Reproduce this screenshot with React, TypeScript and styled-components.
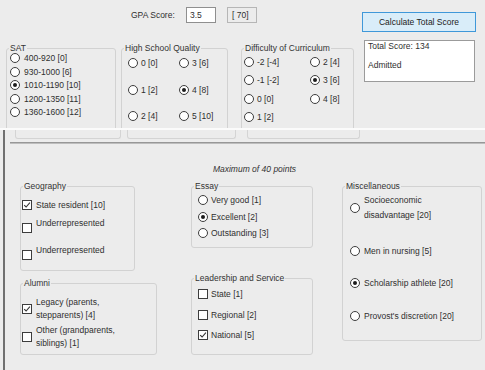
import React from "react";
import styled, { createGlobalStyle } from "styled-components";

const GlobalStyle = createGlobalStyle`
  html, body {
    margin: 0;
    padding: 0;
    background: #ececec;
  }
  body {
    font-family: "Liberation Sans", Arial, sans-serif;
  }
`;

const Window = styled.div`
  width: 485px;
  height: 370px;
  overflow: hidden;
  display: flex;
  flex-direction: column;
  background: #ececec;
  color: #2f2f2f;
  font-size: 8.5px;
  line-height: 10px;
`;

/* ---------- top panel ---------- */

const TopPanel = styled.div`
  flex: none;
  height: 128px;
  overflow: hidden;
  display: flex;
  padding-left: 6px;
`;

const InputsColumn = styled.div`
  flex: none;
  width: 348px;
  display: flex;
  flex-direction: column;
`;

const GpaRow = styled.div`
  display: flex;
  align-items: center;
  height: 16px;
  margin-top: 7px;
  padding-left: 125px;
`;

const GpaLabel = styled.span`
  width: 55px;
`;

const TextBox = styled.div`
  box-sizing: border-box;
  width: 30px;
  height: 16px;
  padding-left: 3px;
  line-height: 14px;
  border: 1px solid #8f8f8f;
  background: #fff;
`;

const Readout = styled.div`
  box-sizing: border-box;
  width: 30px;
  height: 16px;
  margin-left: 11px;
  padding-left: 4px;
  line-height: 14px;
  border: 1px solid #b6b6b6;
`;

const GroupRow = styled.div`
  display: flex;
  margin-top: 20px;
`;

const ActionColumn = styled.div`
  flex: none;
  width: 114px;
  margin-left: 8px;
  display: flex;
  flex-direction: column;
`;

const CalcButton = styled.button`
  box-sizing: border-box;
  height: 20px;
  margin-top: 12px;
  padding: 0;
  border: 1px solid #3f98d9;
  background: #d9edf9;
  color: #222;
  font: inherit;
  line-height: 18px;
`;

const ResultBox = styled.div`
  box-sizing: border-box;
  width: 111px;
  height: 42px;
  margin: 8px 0 0 2px;
  padding: 1px 3px;
  border: 1px solid #9b9b9b;
  background: #fff;
  line-height: 9.5px;
  white-space: pre-line;
`;

/* ---------- group boxes ---------- */

const GroupBox = styled.fieldset<{ $w: number; $h: number; $ml?: number }>`
  box-sizing: border-box;
  flex: none;
  width: ${(p) => p.$w}px;
  height: ${(p) => p.$h}px;
  min-width: 0;
  margin: 0 0 0 ${(p) => p.$ml ?? 0}px;
  padding: 0;
  border: 1px solid #d2d2d2;
  border-radius: 3px;
`;

const Caption = styled.legend`
  height: 10px;
  margin-left: 2px;
  padding: 0 1px;
  line-height: 10px;
  color: #333;
`;

const OptionList = styled.div<{ $pt: number; $pl: number; $gap: number }>`
  display: flex;
  flex-direction: column;
  gap: ${(p) => p.$gap}px;
  padding: ${(p) => p.$pt}px 0 0 ${(p) => p.$pl}px;
`;

const OptionGrid = styled.div<{ $rows: number; $col: number; $pt: number; $pl: number; $gap: number }>`
  display: grid;
  grid-auto-flow: column;
  grid-template-rows: repeat(${(p) => p.$rows}, 10px);
  grid-auto-columns: ${(p) => p.$col}px;
  row-gap: ${(p) => p.$gap}px;
  padding: ${(p) => p.$pt}px 0 0 ${(p) => p.$pl}px;
`;

const Choice = styled.div<{ $h?: number; $lh?: number; $gap?: number }>`
  display: flex;
  align-items: center;
  gap: ${(p) => p.$gap ?? 4}px;
  height: ${(p) => p.$h ?? 10}px;
  line-height: ${(p) => p.$lh ?? 10}px;
  white-space: pre-line;
`;

const ChoiceText = styled.span`
  align-self: flex-start;
`;

const RadioMark = styled.span<{ $on?: boolean }>`
  box-sizing: border-box;
  flex: none;
  width: 10px;
  height: 10px;
  border-radius: 50%;
  border: 1px solid #3d3d3d;
  background: #fff;
  display: flex;
  align-items: center;
  justify-content: center;

  &::after {
    content: "";
    width: 4px;
    height: 4px;
    border-radius: 50%;
    background: ${(p) => (p.$on ? "#1c1c1c" : "transparent")};
  }
`;

const CheckMark = styled.span`
  box-sizing: border-box;
  flex: none;
  width: 10px;
  height: 10px;
  border: 1px solid #3d3d3d;
  background: #fff;
  display: flex;
  align-items: center;
  justify-content: center;

  svg {
    display: block;
  }
`;

/* ---------- lower panel ---------- */

const LowerPanel = styled.div`
  flex: 1;
  margin-left: 3px;
  border-left: 2px solid #707070;
  display: flex;
  flex-direction: column;
`;

const WhiteRule = styled.div`
  flex: none;
  height: 2px;
  background: #fbfbfb;
`;

const StubStrip = styled.div`
  display: flex;
  height: 10px;
  padding-left: 10px;
`;

const StubBox = styled.div<{ $w: number; $ml: number }>`
  box-sizing: border-box;
  width: ${(p) => p.$w}px;
  height: 9px;
  margin-left: ${(p) => p.$ml}px;
  border: 1px solid #d4d4d4;
  border-top: none;
  border-radius: 0 0 3px 3px;
`;

const Separator = styled.div`
  height: 1px;
  margin: 2px 0 0 5px;
  background: #979797;
  border-bottom: 1px solid #bdbdbd;
`;

const Note = styled.div`
  height: 10px;
  margin-top: 20px;
  padding-left: 19px;
  text-align: center;
  font-style: italic;
  color: #333;
`;

const Columns = styled.div`
  display: flex;
  margin-top: 7px;
  padding-left: 15px;
`;

const Column = styled.div<{ $w: number; $ml?: number; $gap?: number }>`
  flex: none;
  width: ${(p) => p.$w}px;
  margin-left: ${(p) => p.$ml ?? 0}px;
  display: flex;
  flex-direction: column;
  gap: ${(p) => p.$gap ?? 0}px;
`;

/* ---------- pieces ---------- */

type Item = { label: string; on?: boolean; h?: number; lh?: number };

const Tick = () => (
  <svg width="8" height="8" viewBox="0 0 8 8">
    <path d="M1.2 4.1 L3.1 6 L6.9 1.7" fill="none" stroke="#333" strokeWidth="1.1" />
  </svg>
);

const Radio = ({ label, on, h, lh, gap }: Item & { gap?: number }) => (
  <Choice $h={h} $lh={lh} $gap={gap}>
    <RadioMark $on={on} />
    <ChoiceText>{label}</ChoiceText>
  </Choice>
);

const Check = ({ label, on, h, lh, gap }: Item & { gap?: number }) => (
  <Choice $h={h} $lh={lh} $gap={gap}>
    <CheckMark>{on && <Tick />}</CheckMark>
    <ChoiceText>{label}</ChoiceText>
  </Choice>
);

const sat: Item[] = [
  { label: "400-920 [0]" },
  { label: "930-1000 [6]" },
  { label: "1010-1190 [10]", on: true },
  { label: "1200-1350 [11]" },
  { label: "1360-1600 [12]" },
];

const quality: Item[] = [
  { label: "0 [0]" },
  { label: "1 [2]" },
  { label: "2 [4]" },
  { label: "3 [6]" },
  { label: "4 [8]", on: true },
  { label: "5 [10]" },
];

const difficulty: Item[] = [
  { label: "-2 [-4]" },
  { label: "-1 [-2]" },
  { label: "0 [0]" },
  { label: "1 [2]" },
  { label: "2 [4]" },
  { label: "3 [6]", on: true },
  { label: "4 [8]" },
];

const geography: Item[] = [
  { label: "State resident [10]", on: true },
  { label: "Underrepresented", h: 20 },
  { label: "Underrepresented", h: 20 },
];

const alumni: Item[] = [
  { label: "Legacy (parents,\nstepparents) [4]", on: true, h: 25, lh: 12.5 },
  { label: "Other (grandparents,\nsiblings) [1]", h: 25, lh: 12.5 },
];

const essay: Item[] = [
  { label: "Very good [1]" },
  { label: "Excellent [2]", on: true },
  { label: "Outstanding [3]" },
];

const leadership: Item[] = [
  { label: "State [1]" },
  { label: "Regional [2]" },
  { label: "National [5]", on: true },
];

const misc: Item[] = [
  { label: "Socioeconomic\ndisadvantage [20]", h: 30, lh: 15 },
  { label: "Men in nursing [5]" },
  { label: "Scholarship athlete [20]", on: true },
  { label: "Provost's discretion [20]" },
];

const stubs = [
  { w: 106, ml: 0 },
  { w: 109, ml: 6 },
  { w: 113, ml: 11 },
];

export default function App() {
  return (
    <>
      <GlobalStyle />
      <Window>
        <TopPanel>
          <InputsColumn>
            <GpaRow>
              <GpaLabel>GPA Score:</GpaLabel>
              <TextBox>3.5</TextBox>
              <Readout>[ 70]</Readout>
            </GpaRow>
            <GroupRow>
              <GroupBox $w={110} $h={95}>
                <Caption>SAT</Caption>
                <OptionList $pt={0} $pl={3} $gap={3.5}>
                  {sat.map((it) => (
                    <Radio key={it.label} {...it} />
                  ))}
                </OptionList>
              </GroupBox>
              <GroupBox $w={107} $h={95} $ml={5}>
                <Caption>High School Quality</Caption>
                <OptionGrid $rows={3} $col={51} $pt={5} $pl={6} $gap={16.5}>
                  {quality.map((it) => (
                    <Radio key={it.label} {...it} gap={3} />
                  ))}
                </OptionGrid>
              </GroupBox>
              <GroupBox $w={113} $h={95} $ml={13}>
                <Caption>Difficulty of Curriculum</Caption>
                <OptionGrid $rows={4} $col={66} $pt={4} $pl={2} $gap={8.3}>
                  {difficulty.map((it) => (
                    <Radio key={it.label} {...it} gap={3} />
                  ))}
                </OptionGrid>
              </GroupBox>
            </GroupRow>
          </InputsColumn>
          <ActionColumn>
            <CalcButton>Calculate Total Score</CalcButton>
            <ResultBox>{"Total Score: 134\n\nAdmitted"}</ResultBox>
          </ActionColumn>
        </TopPanel>

        <WhiteRule />

        <LowerPanel>
          <StubStrip>
            {stubs.map((s) => (
              <StubBox key={s.ml} $w={s.w} $ml={s.ml} />
            ))}
          </StubStrip>
          <Separator />
          <Note>Maximum of 40 points</Note>
          <Columns>
            <Column $w={137} $gap={7}>
              <GroupBox $w={115} $h={90}>
                <Caption>Geography</Caption>
                <OptionList $pt={9} $pl={1} $gap={7.5}>
                  {geography.map((it, i) => (
                    <Check key={i} {...it} />
                  ))}
                </OptionList>
              </GroupBox>
              <GroupBox $w={137} $h={77}>
                <Caption>Alumni</Caption>
                <OptionList $pt={8} $pl={1} $gap={3}>
                  {alumni.map((it) => (
                    <Check key={it.label} {...it} />
                  ))}
                </OptionList>
              </GroupBox>
            </Column>
            <Column $w={122} $ml={34} $gap={25}>
              <GroupBox $w={122} $h={67}>
                <Caption>Essay</Caption>
                <OptionList $pt={4} $pl={6} $gap={6.5}>
                  {essay.map((it) => (
                    <Radio key={it.label} {...it} gap={3} />
                  ))}
                </OptionList>
              </GroupBox>
              <GroupBox $w={122} $h={82}>
                <Caption>Leadership and Service</Caption>
                <OptionList $pt={6} $pl={6} $gap={10.5}>
                  {leadership.map((it) => (
                    <Check key={it.label} {...it} gap={3} />
                  ))}
                </OptionList>
              </GroupBox>
            </Column>
            <Column $w={140} $ml={29}>
              <GroupBox $w={140} $h={160}>
                <Caption>Miscellaneous</Caption>
                <OptionList $pt={2} $pl={7} $gap={22.5}>
                  {misc.map((it) => (
                    <Radio key={it.label} {...it} />
                  ))}
                </OptionList>
              </GroupBox>
            </Column>
          </Columns>
        </LowerPanel>
      </Window>
    </>
  );
}
